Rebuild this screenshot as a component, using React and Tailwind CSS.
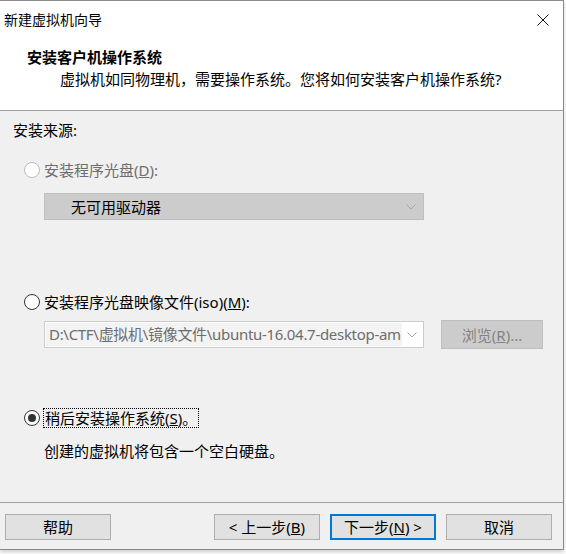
import React from "react";

const font = { fontFamily: '"Noto Sans", "Noto Sans CJK SC", sans-serif' };

const Radio = ({ checked, disabled }) => (
  <span
    className={`flex w-[16px] h-[16px] shrink-0 items-center justify-center rounded-full border bg-white ${
      disabled ? "border-[#bcbcbc]" : "border-[#333333]"
    }`}
  >
    {checked && <span className="w-[8px] h-[8px] rounded-full bg-[#333333]" />}
  </span>
);

const Chevron = () => (
  <svg width="10" height="6" viewBox="0 0 10 6" className="shrink-0">
    <path d="M0.5 0.5 L5 5 L9.5 0.5" fill="none" stroke="#a6a6a6" strokeWidth="1" />
  </svg>
);

const Button = ({ children, primary }) => (
  <button
    className={`w-[106px] h-[26px] flex items-center justify-center bg-[#e1e1e1] text-[15px] leading-[20px] text-black ${
      primary ? "border-2 border-[#0078d7]" : "border border-[#adadad]"
    }`}
  >
    {children}
  </button>
);

const App = () => {
  return (
    <div className="w-[566px] h-[554px] bg-white" style={font}>
      <div className="w-[564px] h-[550px] flex flex-col border-t border-r border-b border-[#8a8a8a] shadow-[0_2px_4px_rgba(0,0,0,0.2)]">
        {/* HEADER */}
        <div className="h-[110px] shrink-0 bg-white border-b border-[#a0a0a0]">
          <div className="h-[38px] flex items-center justify-between pl-[4px] pr-[14px]">
            <span className="text-[14px] leading-[20px] text-black">新建虚拟机向导</span>
            <svg width="12" height="12" viewBox="0 0 12 12">
              <path d="M0.5 0.5 L11.5 11.5 M11.5 0.5 L0.5 11.5" stroke="#111" strokeWidth="1" />
            </svg>
          </div>
          <div className="pl-[27px] mt-[8px] text-[15px] leading-[20px] font-bold text-black">
            安装客户机操作系统
          </div>
          <div className="pl-[60px] mt-[2px] text-[15px] leading-[20px] text-black">
            虚拟机如同物理机，需要操作系统。您将如何安装客户机操作系统?
          </div>
        </div>

        {/* BODY */}
        <div className="h-[391px] shrink-0 bg-[#f0f0f0] text-[15px] leading-[20px] text-black">
          <div className="pl-[13px] pt-[9px]">安装来源:</div>

          <div className="flex items-center gap-[4px] pl-[24px] mt-[20px] h-[20px] text-[#6d6d6d]">
            <Radio disabled />
            <span>
              安装程序光盘(<span className="underline">D</span>):
            </span>
          </div>

          <div className="ml-[44px] mt-[13px] w-[380px] h-[27px] flex items-center justify-between bg-[#cccccc] border border-[#bfbfbf] pl-[26px] pr-[7px]">
            <span>无可用驱动器</span>
            <Chevron />
          </div>

          <div className="flex items-center gap-[4px] pl-[24px] mt-[72px] h-[20px]">
            <Radio />
            <span>
              安装程序光盘映像文件(iso)(<span className="underline">M</span>):
            </span>
          </div>

          <div className="flex items-center ml-[44px] mt-[8px] gap-[17px]">
            <div className="w-[380px] h-[27px] flex items-center justify-between bg-white border border-[#cccccc] pl-[1px] pr-[6px]">
              <span className="h-[23px] whitespace-nowrap bg-[#f3f3f3] text-[#6d6d6d] pl-[3px] pr-[1px] leading-[23px] tracking-[-0.3px]">
                D:\CTF\虚拟机\镜像文件\ubuntu-16.04.7-desktop-am
              </span>
              <Chevron />
            </div>
            <div className="w-[102px] h-[29px] flex items-center justify-center bg-[#cccccc] border border-[#bfbfbf] text-[#838383]">
              浏览(<span className="underline">R</span>)...
            </div>
          </div>

          <div className="flex items-center gap-[3px] pl-[24px] mt-[59px] h-[20px]">
            <Radio checked />
            <span className="border border-dotted border-black px-[1px] leading-[18px]">
              稍后安装操作系统(<span className="underline">S</span>)。
            </span>
          </div>

          <div className="pl-[44px] mt-[13px]">创建的虚拟机将包含一个空白硬盘。</div>
        </div>

        {/* FOOTER */}
        <div className="h-[47px] shrink-0 bg-[#f0f0f0] border-t border-[#a0a0a0] flex items-start justify-between pl-[5px] pr-[11px] pt-[11px]">
          <Button>帮助</Button>
          <div className="flex gap-[10px]">
            <Button>
              &lt; 上一步(<span className="underline">B</span>)
            </Button>
            <Button primary>
              下一步(<span className="underline">N</span>) &gt;
            </Button>
            <Button>取消</Button>
          </div>
        </div>
      </div>
    </div>
  );
};

export default App;
